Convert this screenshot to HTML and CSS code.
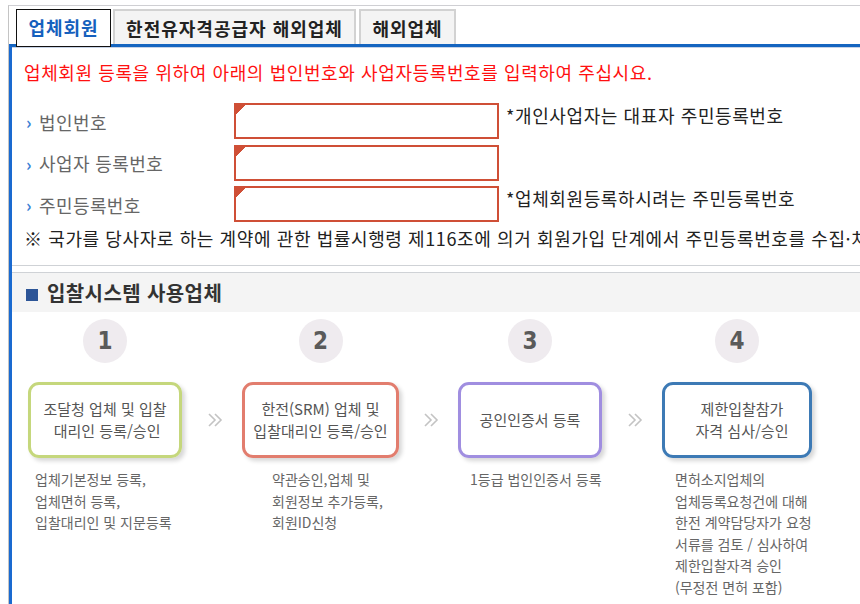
FILE: index.html
```html
<!DOCTYPE html>
<html lang="ko">
<head>
<meta charset="utf-8">
<title>업체회원</title>
<link rel="stylesheet" href="styles.css">
</head>
<body>
<div class="frame">
  <div class="tabs">
    <div class="tab active">업체회원</div>
    <div class="tab t2">한전유자격공급자 해외업체</div>
    <div class="tab t3">해외업체</div>
  </div>
  <div class="panel">
    <div class="panel-inner">
      <p class="notice">업체회원 등록을 위하여 아래의 법인번호와 사업자등록번호를 입력하여 주십시요.</p>
      <div class="form">
        <div class="row">
          <label class="label"><span class="chev">›</span>법인번호</label>
          <input class="field" type="text">
          <span class="hint">*개인사업자는 대표자 주민등록번호</span>
        </div>
        <div class="row">
          <label class="label"><span class="chev">›</span>사업자 등록번호</label>
          <input class="field" type="text">
          <span class="hint"></span>
        </div>
        <div class="row">
          <label class="label"><span class="chev">›</span>주민등록번호</label>
          <input class="field" type="text">
          <span class="hint">*업체회원등록하시려는 주민등록번호</span>
        </div>
      </div>
      <p class="note">※ 국가를 당사자로 하는 계약에 관한 법률시행령 제116조에 의거 회원가입 단계에서 주민등록번호를 수집·처리합니다.</p>
    </div>
    <div class="section">
      <h2 class="sec-title"><span class="sq"></span>입찰시스템 사용업체</h2>
      <div class="steps">
        <div class="step s1">
          <div class="num">1</div>
          <div class="box b1">조달청 업체 및 입찰<br>&nbsp;대리인 등록/승인</div>
          <div class="desc">업체기본정보 등록,<br>업체면허 등록,<br>입찰대리인 및 지문등록</div>
        </div>
        <div class="arrow a1"><svg width="16" height="16" viewBox="0 0 16 16"><path d="M2 2 L8 8 L2 14 M8 2 L14 8 L8 14" fill="none" stroke="#c3c3c3" stroke-width="1.6"/></svg></div>
        <div class="step s2">
          <div class="num">2</div>
          <div class="box b2">한전(SRM) 업체 및<br>입찰대리인 등록/승인</div>
          <div class="desc">약관승인,업체 및<br>회원정보 추가등록,<br>회원ID신청</div>
        </div>
        <div class="arrow a2"><svg width="16" height="16" viewBox="0 0 16 16"><path d="M2 2 L8 8 L2 14 M8 2 L14 8 L8 14" fill="none" stroke="#c3c3c3" stroke-width="1.6"/></svg></div>
        <div class="step s3">
          <div class="num">3</div>
          <div class="box b3">공인인증서 등록</div>
          <div class="desc">1등급 법인인증서 등록</div>
        </div>
        <div class="arrow a3"><svg width="16" height="16" viewBox="0 0 16 16"><path d="M2 2 L8 8 L2 14 M8 2 L14 8 L8 14" fill="none" stroke="#c3c3c3" stroke-width="1.6"/></svg></div>
        <div class="step s4">
          <div class="num">4</div>
          <div class="box b4">제한입찰참가<br>자격 심사/승인</div>
          <div class="desc">면허소지업체의<br>업체등록요청건에 대해<br>한전 계약담당자가 요청<br>서류를 검토 / 심사하여<br>제한입찰자격 승인<br>(무정전 면허 포함)</div>
        </div>
      </div>
    </div>
  </div>
</div>
</body>
</html>
```

FILE: styles.css
```css
html, body {
  margin: 0;
  padding: 0;
  overflow: hidden;
  background: #fff;
}
body {
  padding-top: 5px;
  padding-left: 8px;
  font-family: "Noto Sans CJK KR", "Noto Sans", sans-serif;
  color: #222;
}
.frame {
  width: 852px;
  height: 599px;
  border-top: 1px solid #cfcfd3;
  border-left: 1px solid #c4c4c4;
  box-sizing: border-box;
  overflow: hidden;
}
.tabs {
  display: flex;
  align-items: flex-start;
  padding: 3px 0 0 7px;
  height: 35px;
}
.tab {
  box-sizing: border-box;
  height: 35px;
  display: flex;
  align-items: center;
  justify-content: center;
  background: #f4f4f4;
  border: 2px solid #d2d2d2;
  border-bottom: none;
  font-size: 18px;
  letter-spacing: 1px;
  font-weight: bold;
  color: #222;
  white-space: nowrap;
}
.tab.active {
  position: relative;
  z-index: 1;
  width: 95px;
  height: 38px;
  background: #fff;
  border: 1px solid #111;
  color: #1560bd;
  padding-bottom: 2px;
}
.tab.t2 {
  width: 243px;
  margin-left: 2px;
}
.tab.t3 {
  width: 97px;
  margin-left: 3px;
}
.panel {
  border-top: 3px solid #1565c0;
  border-left: 3px solid #1a6ad0;
  height: 560px;
}
.panel-inner {
  border-top: 1px solid #c7d3e6;
  padding: 12px 0 0 12px;
  border-bottom: 1px solid #cfd2d6;
  padding-bottom: 15px;
}
.notice {
  margin: 0;
  font-size: 18px;
  letter-spacing: 0.6px;
  line-height: 24px;
  color: #ff1010;
  white-space: nowrap;
}
.form {
  margin-top: 19px;
  display: flex;
  flex-direction: column;
  gap: 5.5px;
}
.row {
  display: flex;
  align-items: flex-start;
  height: 36px;
}
.label {
  width: 210px;
  flex: none;
  height: 36px;
  display: flex;
  align-items: center;
  font-size: 18px;
  letter-spacing: 0.4px;
  color: #666;
  padding-top: 1px;
  box-sizing: border-box;
}
.chev {
  color: #3b7fd4;
  font-weight: bold;
  font-size: 17px;
  width: 15px;
  padding-left: 2px;
  box-sizing: border-box;
}
.field {
  flex: none;
  width: 265px;
  height: 36px;
  box-sizing: border-box;
  margin: 0;
  border: 2px solid #cf4f36;
  background: linear-gradient(135deg, #cf4f36 7px, transparent 7px) #fff;
  outline: none;
  padding: 0 6px;
}
.hint {
  margin-left: 7px;
  font-size: 18px;
  letter-spacing: 0.6px;
  line-height: 24px;
  color: #222;
  white-space: nowrap;
}
.note {
  margin: 4px 0 0 0;
  font-size: 18px;
  letter-spacing: 0.6px;
  line-height: 24px;
  color: #222;
  white-space: nowrap;
}
.section {
  margin-top: 6px;
}
.sec-title {
  margin: 0;
  height: 39px;
  border-top: 1px solid #cfd2d6;
  background: #f4f4f4;
  display: flex;
  align-items: center;
  padding-left: 14px;
  font-size: 20px;
  letter-spacing: 0.4px;
  font-weight: bold;
  color: #333;
}
.sq {
  width: 12px;
  height: 12px;
  background: #2d5597;
  margin-right: 9px;
  margin-top: 4px;
}
.steps {
  display: flex;
  padding: 7px 0 0 16px;
}
.step {
  display: flex;
  flex-direction: column;
  flex: none;
}
.s1 { width: 154px; }
.s2 { width: 157px; }
.s3 { width: 144px; }
.s4 { width: 150px; }
.a1, .a3 { width: 60px; }
.a2 { width: 59px; }
.num {
  width: 44px;
  height: 44px;
  border-radius: 50%;
  background: #efebef;
  margin: 0 auto;
  display: flex;
  align-items: center;
  justify-content: center;
  font-family: "DejaVu Sans Condensed", "DejaVu Sans", sans-serif;
  font-weight: bold;
  font-size: 24px;
  color: #5a5a5a;
}
.box {
  margin-top: 19px;
  height: 76px;
  box-sizing: border-box;
  border: 3px solid #c5d77c;
  border-radius: 11px;
  display: flex;
  align-items: center;
  justify-content: center;
  text-align: center;
  font-size: 15px;
  line-height: 22px;
  color: #555;
  box-shadow: 3px 3px 4px rgba(0, 0, 0, 0.16);
  white-space: nowrap;
}
.b2 { border-color: #e27d6e; }
.b3 { border-color: #a08ee0; }
.b4 { border-color: #3d7ab5; padding-left: 10px; }
.desc {
  margin-top: 11px;
  font-size: 14px;
  line-height: 21.5px;
  color: #666;
  white-space: nowrap;
}
.s1 .desc { padding-left: 7px; }
.s2 .desc { padding-left: 30px; }
.s3 .desc { padding-left: 12px; }
.s4 .desc { padding-left: 13px; }
.arrow {
  flex: none;
  display: flex;
  justify-content: center;
  margin-top: 93px;
  height: 16px;
}
.a1 svg { margin-left: 6px; }
.a2 svg { margin-left: 4px; }
.a3 svg { margin-left: 6px; }
```
